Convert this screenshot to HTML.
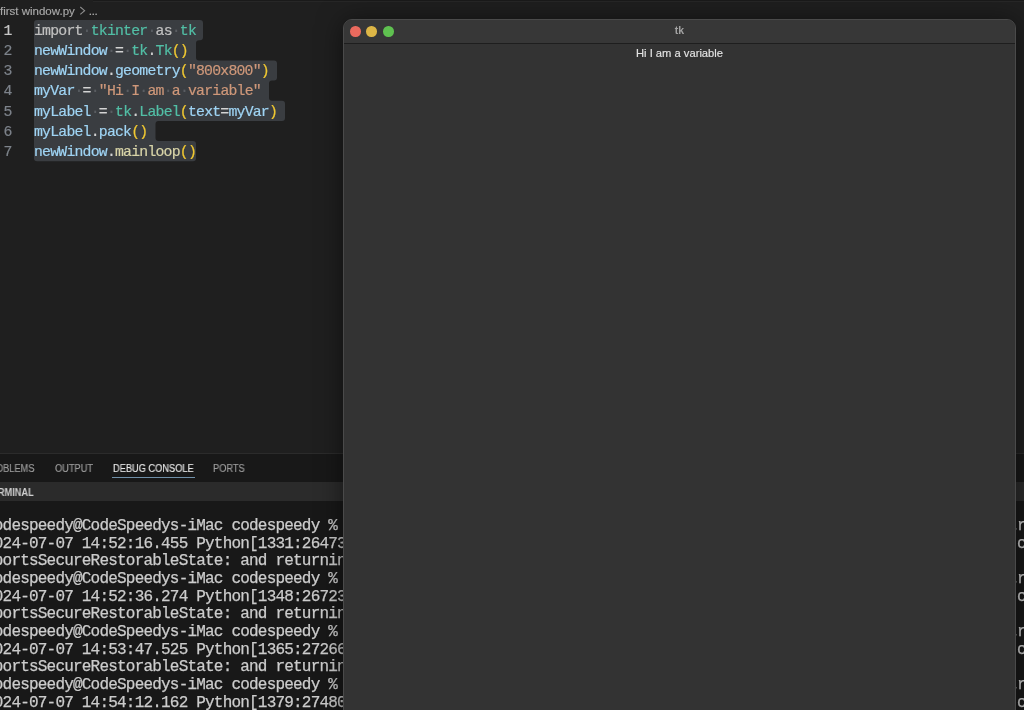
<!DOCTYPE html>
<html><head><meta charset="utf-8">
<style>
*{margin:0;padding:0;box-sizing:border-box}
body *{will-change:transform}
html,body{width:1024px;height:710px;overflow:hidden;background:#1f1f1f;position:relative;font-family:"Liberation Sans",sans-serif}
.abs{position:absolute}
#topline{left:93px;top:0;width:931px;height:2px;background:#1a1a1a;border-bottom:1px solid #272727}
#crumb{-webkit-text-stroke:0.15px currentColor;left:0;top:4px;font-size:11.5px;color:#a9a9a9;white-space:pre;line-height:14px}
#lnums{-webkit-text-stroke:0.2px currentColor;left:0;top:21px;width:12.5px;font-family:"Liberation Mono",monospace;font-size:14.8px;line-height:20.17px;text-align:right;color:#7d838b}
#lnums div{height:20.17px}
.sel{background:#3a3d41;height:20px;left:34px}
#code{-webkit-text-stroke:0.2px currentColor;left:34px;top:21px;font-family:"Liberation Mono",monospace;font-size:14.8px;letter-spacing:-0.78px;line-height:20.17px;white-space:pre;color:#d4d4d4}
#code div{height:20.17px}
.kw{color:#c0c0c0}.md{color:#52bfa6}.vr{color:#9fd4f4}.fn{color:#d8d4a8}.br{color:#f0c832}.st{color:#cf987a}.op{color:#d4d4d4}
.ws{color:#5a5d62}
#panelbar{left:0;top:453px;width:1024px;height:1px;background:#2b2b2b}
#panel{left:0;top:454px;width:1024px;height:256px;background:#181818}
.tab{top:463px;font-size:10px;color:#9d9d9d;-webkit-text-stroke:0.15px currentColor;white-space:pre;transform:scaleX(0.925);transform-origin:0 0;line-height:12px}
#uline{left:112px;top:477px;width:83px;height:1px;background:#6f8fa8}
#termhdr{left:0;top:482px;width:1024px;height:19px;background:#2b2b2b}
#termlbl{left:-14.5px;top:486.7px;font-size:10px;font-weight:bold;color:#cfcfcf;line-height:12px;transform:scaleX(0.925);transform-origin:0 0}
#term{-webkit-text-stroke:0.25px currentColor;left:-15.4px;top:518.1px;font-family:"Liberation Mono",monospace;font-size:16px;letter-spacing:-0.8px;line-height:17.65px;white-space:pre;color:#cccccc}
#rterm{-webkit-text-stroke:0.25px currentColor;left:1017.2px;top:518.1px;font-family:"Liberation Mono",monospace;font-size:16px;letter-spacing:-0.8px;line-height:17.65px;white-space:pre;color:#cccccc}
#win{left:343px;top:19px;width:673px;height:720px;background:#333333;border:1px solid #4a4a4a;border-radius:9px 9px 0 0;box-shadow:0 2px 26px rgba(0,0,0,0.5)}
#title{left:0;top:0;width:100%;height:24px;background:#373737;border-bottom:1px solid #1e1e1e;border-radius:8px 8px 0 0}
.tl{width:10.5px;height:10.5px;border-radius:50%;top:5.75px}
#ttl{left:0;width:100%;top:4.0px;text-align:center;font-size:10.5px;font-weight:bold;color:#a2a2a2;line-height:12px}
#hi{-webkit-text-stroke:0.15px currentColor;left:0;width:100%;top:26.0px;text-align:center;font-size:11.2px;color:#e2e2e2;line-height:14px}
</style></head><body>
<div class="abs" id="topline"></div>
<div class="abs" id="crumb">first window.py</div>
<svg class="abs" style="left:0;top:0" width="100" height="20"><polyline points="80.3,7 84.6,10.7 80.3,14.4" fill="none" stroke="#8e8e8e" stroke-width="1.1"/><circle cx="90.3" cy="14.2" r="0.8" fill="#bdbdbd"/><circle cx="93.2" cy="14.2" r="0.8" fill="#bdbdbd"/><circle cx="96.1" cy="14.2" r="0.8" fill="#bdbdbd"/></svg>
<div class="abs" id="lnums"><div style="color:#c6c6c6">1</div><div>2</div><div>3</div><div>4</div><div>5</div><div>6</div><div>7</div></div>
<svg class="abs" style="left:0;top:0" width="300" height="170"><path fill="#3a3d41" d="M37.00 20.05 L200.00 20.05 A3 3 0 0 1 203.00 23.05 L203.00 37.22 A3 3 0 0 1 200.00 40.22 L199.00 40.22 A3 3 0 0 0 196.00 43.22 L196.00 57.39 A3 3 0 0 0 199.00 60.39 L274.00 60.39 A3 3 0 0 1 277.00 63.39 L277.00 77.56 A3 3 0 0 1 274.00 80.56 L272.00 80.56 A3 3 0 0 0 269.00 83.56 L269.00 97.73 A3 3 0 0 0 272.00 100.73 L282.00 100.73 A3 3 0 0 1 285.00 103.73 L285.00 117.90 A3 3 0 0 1 282.00 120.90 L158.50 120.90 A3 3 0 0 0 155.50 123.90 L155.50 138.07 A3 3 0 0 0 158.50 141.07 L193.00 141.07 A3 3 0 0 1 196.00 144.07 L196.00 158.24 A3 3 0 0 1 193.00 161.24 L37.00 161.24 A3 3 0 0 1 34.00 158.24 L34.00 23.05 A3 3 0 0 1 37.00 20.05Z"/></svg>
<div class="abs" id="code"><div><span class="kw">import</span><span class="ws">·</span><span class="md">tkinter</span><span class="ws">·</span><span class="kw">as</span><span class="ws">·</span><span class="md">tk</span></div><div><span class="vr">newWindow</span><span class="ws">·</span><span class="op">=</span><span class="ws">·</span><span class="md">tk</span><span class="op">.</span><span class="md">Tk</span><span class="br">()</span></div><div><span class="vr">newWindow</span><span class="op">.</span><span class="vr">geometry</span><span class="br">(</span><span class="st">"800x800"</span><span class="br">)</span></div><div><span class="vr">myVar</span><span class="ws">·</span><span class="op">=</span><span class="ws">·</span><span class="st">"Hi<span class="ws">·</span>I<span class="ws">·</span>am<span class="ws">·</span>a<span class="ws">·</span>variable"</span></div><div><span class="vr">myLabel</span><span class="ws">·</span><span class="op">=</span><span class="ws">·</span><span class="md">tk</span><span class="op">.</span><span class="md">Label</span><span class="br">(</span><span class="vr">text</span><span class="op">=</span><span class="vr">myVar</span><span class="br">)</span></div><div><span class="vr">myLabel</span><span class="op">.</span><span class="vr">pack</span><span class="br">()</span></div><div><span class="vr">newWindow</span><span class="op">.</span><span class="fn">mainloop</span><span class="br">()</span></div></div>

<div class="abs" id="panelbar"></div>
<div class="abs" id="panel"></div>
<div class="abs tab" style="left:-17px">PROBLEMS</div>
<div class="abs tab" style="left:55px">OUTPUT</div>
<div class="abs tab" style="left:113px;color:#e7e7e7">DEBUG CONSOLE</div>
<div class="abs tab" style="left:213px">PORTS</div>
<div class="abs" id="uline"></div>
<div class="abs" id="termhdr"></div>
<div class="abs" id="termlbl">TERMINAL</div>
<div class="abs" id="term">codespeedy@CodeSpeedys-iMac codespeedy % 
2024-07-07 14:52:16.455 Python[1331:26473
pportsSecureRestorableState: and returning
codespeedy@CodeSpeedys-iMac codespeedy % 
2024-07-07 14:52:36.274 Python[1348:26723
pportsSecureRestorableState: and returning
codespeedy@CodeSpeedys-iMac codespeedy % 
2024-07-07 14:53:47.525 Python[1365:27266
pportsSecureRestorableState: and returning
codespeedy@CodeSpeedys-iMac codespeedy % 
2024-07-07 14:54:12.162 Python[1379:27480</div>
<svg class="abs" style="left:1010px;top:520px" width="14" height="190"><rect x="5.3" y="8.2" width="1.4" height="1.4" fill="#8a8a8a"/><rect x="5.3" y="61.15" width="1.4" height="1.4" fill="#8a8a8a"/><rect x="5.3" y="114.1" width="1.4" height="1.4" fill="#8a8a8a"/><rect x="5.3" y="167.05" width="1.4" height="1.4" fill="#8a8a8a"/></svg>
<div class="abs" id="rterm">r
c

r
c

r
c

r
c</div>

<div class="abs" id="win">
  <div class="abs" id="title"></div>
  <div class="abs tl" style="left:5.55px;background:#ea6a5e"></div>
  <div class="abs tl" style="left:22.35px;background:#ddb646"></div>
  <div class="abs tl" style="left:38.95px;background:#5fc150"></div>
  <div class="abs" id="ttl">tk</div>
  <div class="abs" id="hi">Hi I am a variable</div>
</div>
</body></html>
